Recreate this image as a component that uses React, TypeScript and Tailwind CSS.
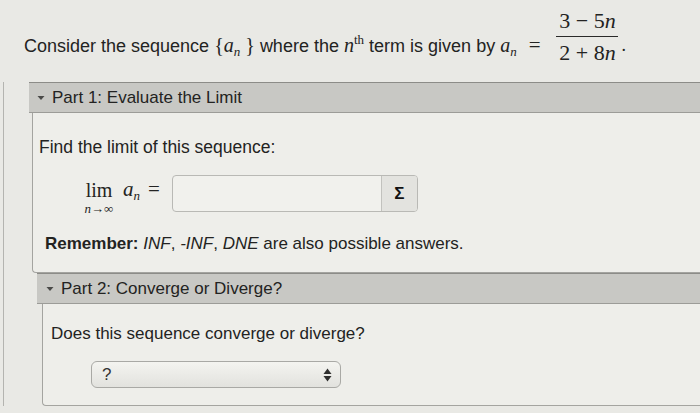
import React from "react";

const sans = { fontFamily: '"Liberation Sans", Arial, sans-serif' };
const serif = { fontFamily: '"Liberation Serif", "Times New Roman", serif' };

function Caret() {
  return (
    <svg width="8" height="6" viewBox="0 0 8 6" className="shrink-0">
      <path d="M0.5 1 L7.5 1 L4 5 Z" fill="#4a4a48" />
    </svg>
  );
}

function SelectArrows() {
  return (
    <svg width="9" height="14" viewBox="0 0 9 14">
      <path d="M4.5 0.5 L8.5 6 L0.5 6 Z" fill="#2f2f2e" />
      <path d="M0.5 8 L8.5 8 L4.5 13.5 Z" fill="#2f2f2e" />
    </svg>
  );
}

function An() {
  return (
    <span style={serif} className="italic">
      a<span className="text-[13px] relative top-[4px] leading-none">n</span>
    </span>
  );
}

export default function App() {
  return (
    <div style={sans} className="w-[700px] h-[413px] overflow-hidden bg-[#e9e9e5] text-[#232322]">
      {/* problem statement */}
      <div className="h-[82px] flex items-start pl-[24px]">
        <div className="mt-[33px] text-[18px] leading-[24px] whitespace-nowrap">
          Consider the sequence{" "}
          <span style={serif} className="text-[20px]">
            {"{"}
            <An />
            {" }"}
          </span>{" "}
          where the{" "}
          <span style={serif} className="text-[20px]">
            <span className="italic">n</span>
            <span className="text-[13px] relative -top-[8px] leading-none">th</span>
          </span>{" "}
          term is given by <span className="text-[20px]"><An /></span>
          <span style={serif} className="text-[21px] ml-[12px] mr-[16px]">=</span>
        </div>
        <div style={serif} className="mt-[9px] flex flex-col items-center text-[22px] w-[62px]">
          <div className="leading-[24px] pb-[3px] whitespace-nowrap">
            3 − 5<span className="italic">n</span>
          </div>
          <div className="h-[1px] w-full bg-[#2a2a29]" />
          <div className="leading-[24px] pt-[4px] whitespace-nowrap">
            2 + 8<span className="italic">n</span>
          </div>
        </div>
        <div style={serif} className="mt-[32px] ml-[3px] text-[18px]">.</div>
      </div>

      <div className="ml-[3px] border-l border-[#b4b4b0]">
        {/* Part 1 header */}
        <div className="ml-[25px] h-[31px] flex items-center gap-[7px] pl-[8px] bg-[#c8c8c4] border-t border-b border-t-[#8c8c88] border-b-[#9c9c98] text-[17px]">
          <Caret />
          <span>Part 1: Evaluate the Limit</span>
        </div>

        {/* Part 1 body */}
        <div className="ml-[28px] bg-[#eeeeea] border-l border-b border-[#a4a4a0] rounded-bl-[4px] pt-[22px] pb-[16px] text-[17px]">
          <div className="pl-[6px] leading-[24px] text-[17.5px]">Find the limit of this sequence:</div>

          <div className="mt-[16px] flex items-center h-[37px]">
            <div style={serif} className="ml-[48px] flex flex-col items-center w-[36px]">
              <span className="text-[20px] leading-[18px] mt-[8px]">lim</span>
              <span className="text-[13px] leading-[13px] mt-[3px] whitespace-nowrap">
                <span className="italic">n</span>→∞
              </span>
            </div>
            <span style={serif} className="ml-[6px] mb-[8px] text-[21px]">
              <An />
            </span>
            <span style={serif} className="ml-[8px] mb-[8px] text-[21px]">=</span>
            <div className="ml-[12px] w-[246px] h-[37px] flex rounded-[4px] border border-[#b9b9b5] bg-[#f1f1ed] overflow-hidden">
              <div className="flex-1" />
              <div className="w-[36px] flex items-center justify-center bg-[#e3e3df] border-l border-[#c2c2be] text-[17px] font-bold text-[#111]">
                Σ
              </div>
            </div>
          </div>

          <div className="mt-[20px] pl-[12px] leading-[24px]">
            <span className="font-bold">Remember:</span> <span className="italic">INF</span>,{" "}
            <span className="italic">-INF</span>, <span className="italic">DNE</span> are also possible answers.
          </div>
        </div>

        {/* Part 2 header */}
        <div className="ml-[33px] h-[31px] flex items-center gap-[7px] pl-[9px] bg-[#c8c8c4] border-t border-b border-t-[#8c8c88] border-b-[#9c9c98] text-[17px]">
          <Caret />
          <span>Part 2: Converge or Diverge?</span>
        </div>

        {/* Part 2 body */}
        <div className="ml-[38px] h-[102px] bg-[#eeeeea] border-l border-b border-[#a4a4a0] rounded-bl-[4px] pt-[18px] text-[17px]">
          <div className="pl-[8px] leading-[24px]">Does this sequence converge or diverge?</div>
          <div className="mt-[15px] ml-[48px] w-[250px] h-[27px] flex items-center justify-between pl-[10px] pr-[8px] rounded-[6px] border border-[#a9a9a5] bg-gradient-to-b from-[#f4f4f0] to-[#e2e2de] text-[17px] text-[#333]">
            <span>?</span>
            <SelectArrows />
          </div>
        </div>
      </div>
    </div>
  );
}
